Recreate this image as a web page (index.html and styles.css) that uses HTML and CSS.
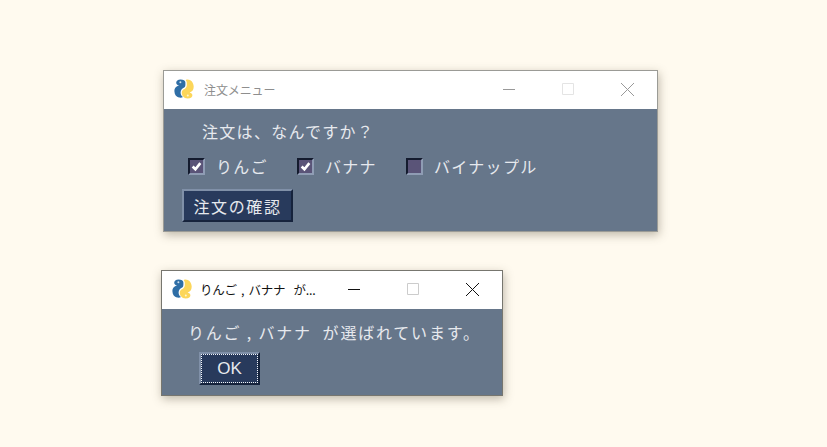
FILE: index.html
```html
<!DOCTYPE html>
<html lang="ja">
<head>
<meta charset="utf-8">
<title>注文メニュー</title>
<link rel="stylesheet" href="styles.css">
</head>
<body>
<svg class="defs" width="0" height="0" aria-hidden="true">
  <symbol id="py" viewBox="0 0 20 20">
    <path fill="#2f6ea6" d="M6.5 0.5C3.8 0.5 2.2 2 2.2 3.8C2.2 5.2 3.4 6.2 5.2 6.6C3.2 6.9 0.4 8.6 0.4 12.2C0.4 15.6 2.4 18 5 18.6C6.6 19 8.2 18.6 9 18C7.6 17 6.6 15.4 6.6 13.4C6.6 11 8.4 9.4 10.2 8.6C11 8.2 11.4 7 11.4 5.6V3.6C11.4 1.6 9.4 0.5 6.5 0.5Z"/>
    <path fill="#fcd65a" d="M13.5 0.6C12.4 0.6 11.8 1 11.8 1.6C12.4 2.2 12.8 3 12.8 4.2V6.4C12.8 8.4 11 9.6 9.4 10.6C8.2 11.4 7.8 12.4 7.8 13.8C7.8 16.4 9.6 19.5 13.6 19.5C17 19.5 18.4 17.8 18.4 16.2C18.4 14.8 17.2 14 15.6 13.6C17.8 13 19.7 11 19.7 7.8C19.7 3.8 17 0.6 13.5 0.6Z"/>
    <circle cx="6.4" cy="3.2" r="1" fill="#cfe0ee"/>
    <circle cx="13.8" cy="16.6" r="1" fill="#fff6d0"/>
  </symbol>
</svg>

<section class="window window-menu">
  <header class="titlebar">
    <svg class="app-icon"><use href="#py"/></svg>
    <span class="title title-dim">注文メニュー</span>
    <div class="controls controls-dim">
      <svg class="ctl" viewBox="0 0 14 14"><path d="M1 7.5H13"/></svg>
      <svg class="ctl ctl-max" viewBox="0 0 14 14"><path d="M1.5 1.5H12.5V12.5H1.5Z"/></svg>
      <svg class="ctl" viewBox="0 0 14 14"><path d="M1 1L14 14M14 1L1 14"/></svg>
    </div>
  </header>
  <div class="content content-menu">
    <p class="question">注文は、なんですか？</p>
    <div class="options">
      <label class="option option-a"><span class="check"><svg viewBox="0 0 10 10"><path d="M1.5 5L4 7.5L8.5 2"/></svg></span>りんご</label>
      <label class="option option-b"><span class="check"><svg viewBox="0 0 10 10"><path d="M1.5 5L4 7.5L8.5 2"/></svg></span>バナナ</label>
      <label class="option"><span class="check"></span>バイナップル</label>
    </div>
    <button class="btn btn-order">注文の確認</button>
  </div>
</section>

<section class="window window-result">
  <header class="titlebar">
    <svg class="app-icon"><use href="#py"/></svg>
    <span class="title">りんご , バナナ&nbsp; が...</span>
    <div class="controls">
      <svg class="ctl" viewBox="0 0 14 14"><path d="M1 7.5H13"/></svg>
      <svg class="ctl ctl-max" viewBox="0 0 14 14"><path d="M1.5 1.5H12.5V12.5H1.5Z"/></svg>
      <svg class="ctl" viewBox="0 0 14 14"><path d="M1 1L14 14M14 1L1 14"/></svg>
    </div>
  </header>
  <div class="content content-result">
    <p class="message">りんご , バナナ&nbsp; が選ばれています。</p>
    <button class="btn btn-ok"><span class="focus">OK</span></button>
  </div>
</section>
</body>
</html>
```
FILE: styles.css
```css
* { box-sizing: border-box; }
html, body { margin: 0; height: 100%; }
body {
  position: relative;
  width: 827px;
  height: 447px;
  overflow: hidden;
  background: #fffaef;
  font-family: "Noto Sans CJK JP", "Liberation Sans", sans-serif;
}
.defs { position: absolute; }
.window {
  position: absolute;
  display: flex;
  flex-direction: column;
  border: 1px solid #9b9b96;
  box-shadow: 1px 3px 9px rgba(70, 60, 40, 0.35);
}
.window-menu { left: 163px; top: 70px; width: 495px; height: 162px; }
.window-result { left: 161px; top: 270px; width: 342px; height: 126px; border-color: #77766f; }
.titlebar {
  height: 38px;
  flex: none;
  display: flex;
  align-items: center;
  background: #fff;
  padding-left: 10px;
}
.app-icon { width: 20px; height: 20px; flex: none; margin-top: -2px; }
.title { margin: -2px 0 0 8px; font-size: 12.5px; color: #111; white-space: nowrap; letter-spacing: -0.2px; word-spacing: 1.5px; }
.title-dim { margin-left: 10px; font-size: 12px; color: #8e8e8e; letter-spacing: -0.1px; }
.controls { margin-left: auto; display: flex; align-items: center; gap: 45px; padding-right: 23px; margin-top: -2px; }
.ctl { width: 14px; height: 14px; fill: none; stroke: #111; stroke-width: 1; }
.ctl-max { stroke: #ccc; }
.controls-dim .ctl { stroke: #999; }
.controls-dim .ctl-max { stroke: #e4e4e4; }
.content {
  flex: 1;
  background: #66768a;
  color: #e6e9ee;
  font-size: 16px;
  letter-spacing: 1.3px;
  display: flex;
  flex-direction: column;
  align-items: flex-start;
}
.content-menu { padding: 10px 0 0 18px; }
.question { margin: 0 0 0 20px; line-height: 24px; height: 24px; }
.options { display: flex; margin: 11px 0 0 6px; }
.option { display: flex; align-items: center; height: 24px; }
.option-a { width: 109px; }
.option-b { width: 109px; }
.check {
  width: 17px;
  height: 17px;
  margin-right: 11px;
  flex: none;
  background: #5a5478;
  border: 2px solid;
  border-color: #141b2e #8f9cb4 #8f9cb4 #141b2e;
  display: flex;
  align-items: center;
  justify-content: center;
}
.check svg { width: 11px; height: 11px; fill: none; stroke: #fff; stroke-width: 2.4; }
.btn {
  font: inherit;
  color: #e6e9ee;
  background: #283a5c;
  border: 2px solid;
  border-color: #8090a8 #16233c #16233c #8090a8;
  padding: 0;
}
.btn-order { width: 111px; height: 33px; margin-top: 11px; letter-spacing: 1.6px; }
.content-result { padding: 11px 0 0 26px; }
.message { margin: 0; line-height: 24px; height: 24px; white-space: nowrap; letter-spacing: 1.8px; }
.btn-ok { width: 61px; height: 33px; margin: 8px 0 0 11px; letter-spacing: 0; }
.focus {
  display: flex;
  align-items: center;
  justify-content: center;
  height: 100%;
  border: 1px dotted #f4f6fa;
  font-family: "Liberation Sans", sans-serif;
  font-size: 17px;
}
```
